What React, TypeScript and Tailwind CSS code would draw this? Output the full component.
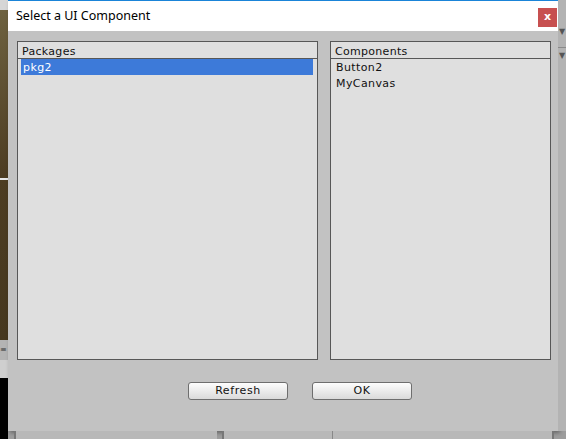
import React from 'react';

const packages = ['pkg2'];
const components = ['Button2', 'MyCanvas'];

function ListPanel({ title, items, selected, width }: { title: string; items: string[]; selected?: number; width: string }) {
  return (
    <div className={`${width} h-[319px] border border-[#575757] bg-[#dfdfdf] flex flex-col`}>
      <div className="h-[17px] border-b border-[#575757] pl-[4px] pt-[2px] text-[11px] leading-[16px] tracking-[0.3px] text-[#111]">{title}</div>
      <div className="flex flex-col">
        {items.map((item, i) => (
          <div
            key={item}
            className={`h-[16px] pt-[1px] leading-[16px] text-[11px] tracking-[0.4px] ${
              selected === i ? 'bg-[#3d7ad9] text-white mx-[3px] mr-[4px] pl-[2px]' : 'text-[#111] pl-[5px]'
            }`}
          >
            {item}
          </div>
        ))}
      </div>
    </div>
  );
}

function UnityButton({ label }: { label: string }) {
  return (
    <button className="w-[100px] h-[18px] rounded-[3px] border border-[#6e6e6e] bg-gradient-to-b from-[#fdfdfd] to-[#dadada] text-[11px] leading-[16px] text-[#111] tracking-[0.6px]">
      {label}
    </button>
  );
}

export default function App() {
  return (
    <div className="w-[566px] h-[439px] overflow-hidden bg-[#a8a8a8] font-['DejaVu_Sans',sans-serif]">
      <div className="flex h-[431px]">
        {/* editor behind, left side */}
        <div className="w-[8px] flex flex-col">
          <div className="h-[10px] bg-[#d6d6d6]" />
          <div className="h-[330px] bg-gradient-to-b from-[#6e6240] via-[#4d3d22] to-[#46381f]">
            <div className="mt-[168px] h-[2px] bg-[#e8e8e8]" />
          </div>
          <div className="h-[20px] bg-[#b4b4b4] text-[8px] leading-[20px] text-[#333]">≡</div>
          <div className="h-[18px] bg-[#cfcfcf]" />
          <div className="flex-1 bg-black" />
        </div>

        {/* dialog */}
        <div className="w-[550px] flex flex-col bg-[#c2c2c2] shadow-[2px_2px_4px_rgba(0,0,0,0.35)]">
          <div className="h-[31px] bg-white border-t border-[#1a84d8] flex items-start justify-between">
            <div className="pl-[8px] pt-[6px] text-[12.5px] leading-[18px] text-black font-['Noto_Sans',sans-serif]">
              Select a UI Component
            </div>
            <div className="mt-[7px] mr-[1px] w-[19px] h-[19px] bg-[#c75050] text-white text-[11px] font-bold leading-[17px] text-center">
              x
            </div>
          </div>

          <div className="flex pt-[10px] pl-[9px] gap-[12px]">
            <ListPanel title="Packages" items={packages} selected={0} width="w-[301px]" />
            <ListPanel title="Components" items={components} width="w-[221px]" />
          </div>

          <div className="flex pt-[22px] pl-[180px] gap-[24px]">
            <UnityButton label="Refresh" />
            <UnityButton label="OK" />
          </div>
        </div>

        {/* editor behind, right side */}
        <div className="w-[8px] flex flex-col bg-[#b3b3b3]">
          <div className="h-[28px]" />
          <div className="text-[8px] leading-[8px] text-[#555] pl-[1px]">▼</div>
          <div className="h-[12px] border-b border-[#8a8a8a]" />
          <div className="text-[8px] leading-[8px] text-[#555] pl-[1px] mt-[4px]">▼</div>
        </div>
      </div>

      {/* editor behind, bottom strip */}
      <div className="flex h-[8px] bg-[#9d9d9d]">
        <div className="w-[8px] bg-black" />
        <div className="w-[6px]" />
        <div className="w-[203px] border-l-2 border-[#777] bg-[#b8b8b8]" />
        <div className="w-[5px]" />
        <div className="w-[110px] border-l-2 border-[#777] bg-[#b8b8b8]" />
        <div className="w-[220px] border-l border-[#888] bg-[#b8b8b8]" />
        <div className="flex-1 border-l-2 border-[#777]" />
      </div>
    </div>
  );
}
